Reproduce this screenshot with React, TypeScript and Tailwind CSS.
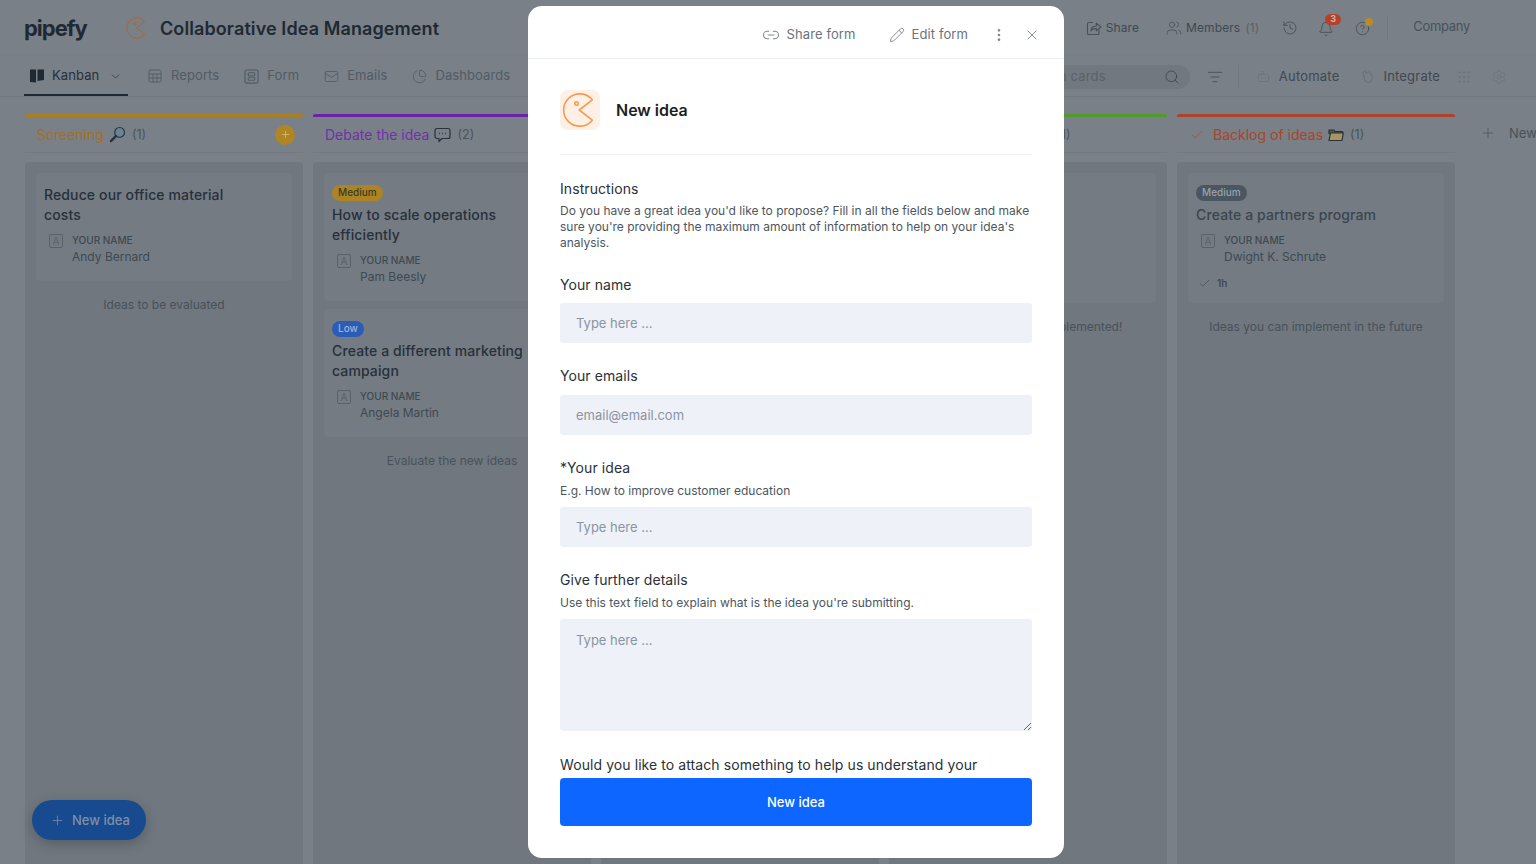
import {
  Bell,
  Bot,
  Check,
  ChevronDown,
  CircleHelp,
  EllipsisVertical,
  Grip,
  History,
  Link2,
  ListFilter,
  Mail,
  Pencil,
  PieChart,
  Plus,
  Search,
  Settings,
  Sheet,
  Users,
  X,
} from "lucide-react";
import type { ReactNode } from "react";

const Pacman = ({ className, color }: { className: string; color: string }) => (
  <svg viewBox="0 0 24 24" fill="none" stroke={color} strokeWidth="1" strokeLinejoin="round" className={className}>
    <path d="M19.8 5.6a10.2 10.2 0 1 0 0 12.8L11.5 12Z" />
    <circle cx="9.8" cy="7.9" r="1.1" />
  </svg>
);

const KanbanIcon = () => (
  <svg viewBox="0 0 14 14" className="w-[14px] h-[14px]" fill="#1f2933">
    <path d="M0 .5h6v13l-6-.5zM7.500.5H14v10.500l-6.500 1z" />
  </svg>
);

const FormIcon = () => (
  <svg viewBox="0 0 16 16" className="w-[15px] h-[15px]" fill="none" stroke="#515b65" strokeWidth="1.2">
    <rect x="1" y="1" width="14" height="14" rx="2" />
    <rect x="4.5" y="4" width="7" height="3.2" rx="1" />
    <rect x="4.5" y="8.8" width="7" height="3.2" rx="1" />
  </svg>
);

const ShareIcon = () => (
  <svg viewBox="0 0 16 16" className="w-[16px] h-[16px]" fill="none" stroke="#48525c" strokeWidth="1.1" strokeLinejoin="round">
    <path d="M7 2.5H2.5a1 1 0 0 0-1 1v10a1 1 0 0 0 1 1h9.5a1 1 0 0 0 1-1V10" />
    <path d="M4.8 11c.4-3 2.4-5 5.5-5V3.2L15 7l-4.7 3.8V8.4C8 8.400 6 9.300 4.800 11Z" />
  </svg>
);

const PlugIcon = () => (
  <svg viewBox="0 0 16 16" className="w-[15px] h-[15px]" fill="none" stroke="#69717a" strokeWidth="1.1" strokeLinejoin="round">
    <path d="M3 3.500 5.500 2l.8 2.600L9.800 3l3 4.200c1 2.800.2 6-3.300 6.800-3.300.3-5.300-2-5-4.800z" />
  </svg>
);

const Magnifier = () => (
  <svg viewBox="0 0 16 16" className="w-[17px] h-[17px]">
    <circle cx="10" cy="6" r="4.600" fill="#6b8395" stroke="#27323c" strokeWidth="1.100" />
    <path d="M6.500 9.500 1.800 14.200" stroke="#27323c" strokeWidth="2.200" strokeLinecap="round" />
  </svg>
);

const Balloon = () => (
  <svg viewBox="0 0 17 16" className="w-[17px] h-[16px]" fill="none" stroke="#27323c" strokeWidth="1.200" strokeLinejoin="round">
    <path d="M3 1.500h11a2 2 0 0 1 2 2v6a2 2 0 0 1-2 2H8l-3 3v-3H3a2 2 0 0 1-2-2v-6a2 2 0 0 1 2-2Z" />
    <path d="M5 6.500h.8M8.100 6.500h.8M11.200 6.500h.8" strokeWidth="1.400" />
  </svg>
);

const Folder = () => (
  <svg viewBox="0 0 16 14" className="w-[16px] h-[14px]" stroke="#27323c" strokeWidth="1.200" strokeLinejoin="round">
    <path d="M1 2h5l1.200 1.500H14.500v2H1Z" fill="#5a5640" />
    <path d="M1 12.500 2.500 5H15.300L14 12.500Z" fill="#a8965e" />
  </svg>
);

const FieldValue = ({ value }: { value: string }) => (
  <div className="flex mt-[8px] pl-[5px]">
    <div className="w-[14px] h-[14px] mt-[1px] rounded-[2px] border border-[#59626b] flex items-center justify-center text-[10px] leading-none text-[#59626b]">
      A
    </div>
    <div className="ml-[9px]">
      <div className="text-[10px] leading-[14px] font-medium text-[#3f4952]">YOUR NAME</div>
      <div className="text-[12px] leading-[18px] mt-[1px] text-[#3f4952]">{value}</div>
    </div>
  </div>
);

type CardData = {
  title: string;
  name: string;
  badge?: "Medium" | "Low" | "Gray";
  done?: boolean;
};

const Badge = ({ kind }: { kind: "Medium" | "Low" | "Gray" }) => {
  if (kind === "Low") {
    return <span className="block w-fit h-[16px] px-[6px] rounded-full bg-[#2a5cb8] text-[#9eb3d6] text-[10px] leading-[15px] font-medium">Low</span>;
  }
  if (kind === "Gray") {
    return <span className="block w-fit h-[16px] px-[6px] rounded-full bg-[#4a5662] text-[#98a3ad] text-[10px] leading-[15px] font-medium">Medium</span>;
  }
  return <span className="block w-fit h-[16px] px-[6px] rounded-full bg-[#ad8424] text-[#3e3a25] text-[10px] leading-[15px] font-medium">Medium</span>;
};

const Card = ({ card }: { card: CardData }) => (
  <div className="rounded-[4px] bg-[#747b82] px-[8px] pt-[12px] pb-[15px] mb-[8px]">
    {card.badge && (
      <div className="mb-[4px]">
        <Badge kind={card.badge} />
      </div>
    )}
    <div className={"text-[14px] tracking-[0.12px] leading-[20px] font-medium pr-[30px] " + (card.badge === "Gray" ? "text-[#3a4550]" : "text-[#27303a]")}>
      {card.title}
    </div>
    <FieldValue value={card.name} />
    {card.done && (
      <div className="flex items-center gap-[6px] mt-[9px] mb-[-3px] pl-[2px] text-[10px] leading-[16px] font-semibold text-[#3f4952]">
        <Check size={13} strokeWidth={1.200} color="#3f4952" />
        1h
      </div>
    )}
  </div>
);

type ColumnData = {
  title: ReactNode;
  color: string;
  bar: string;
  count?: string;
  emoji?: ReactNode;
  check?: boolean;
  add?: boolean;
  cards: CardData[];
  blank?: boolean;
  note?: string;
};

const Column = ({ col }: { col: ColumnData }) => (
  <div className="w-[278px] shrink-0 flex flex-col gap-[9px]">
    <div className={"h-[39px] rounded-t-[2px] border-t-[3px] border-b border-b-[#71787f] flex items-center pl-[12px] pr-[8px] " + col.bar}>
      {col.check && <Check size={14} strokeWidth={1.300} color="#a8452a" className="mr-[9px] ml-[1px]" />}
      <span className={"text-[14px] whitespace-nowrap " + col.color}>{col.title}</span>
      {col.emoji && <span className="ml-[5px] flex items-center">{col.emoji}</span>}
      {col.count && <span className="ml-[6px] mt-[1px] text-[12.500px] text-[#4a545e]">{col.count}</span>}
      {col.add && (
        <span className="ml-auto w-[20px] h-[20px] rounded-full bg-[#b08524] flex items-center justify-center">
          <Plus size={11} color="#d0b478" />
        </span>
      )}
    </div>
    <div className="flex-1 bg-[#70777e] rounded-t-[4px] px-[11px] pt-[11px]">
      {col.cards.map((card) => (
        <Card key={card.title} card={card} />
      ))}
      {col.blank && <div className="h-[130px] rounded-[4px] bg-[#747b82] mb-[8px]" />}
      {col.note && <div className="text-center text-[12px] leading-[18px] mt-[15px] text-[#48525c] whitespace-nowrap">{col.note}</div>}
    </div>
  </div>
);

const columns: ColumnData[] = [
  {
    title: "Screening",
    color: "text-[#a66f1e]",
    bar: "border-t-[#a97f22]",
    emoji: <Magnifier />,
    count: "(1)",
    add: true,
    cards: [{ title: "Reduce our office material costs", name: "Andy Bernard" }],
    note: "Ideas to be evaluated",
  },
  {
    title: "Debate the idea",
    color: "text-[#7230ab]",
    bar: "border-t-[#6c22a6]",
    emoji: <Balloon />,
    count: "(2)",
    cards: [
      { title: "How to scale operations efficiently", name: "Pam Beesly", badge: "Medium" },
      { title: "Create a different marketing campaign", name: "Angela Martin", badge: "Low" },
    ],
    note: "Evaluate the new ideas",
  },
  {
    title: "",
    color: "",
    bar: "border-t-[#70777e]",
    cards: [],
  },
  {
    title: "Implement these ideas",
    color: "text-[#787f86]",
    bar: "border-t-[#4f9a2c]",
    count: "(1)",
    cards: [],
    blank: true,
    note: "These ideas will be implemented!",
  },
  {
    title: "Backlog of ideas",
    color: "text-[#a8452a]",
    bar: "border-t-[#aa452b]",
    check: true,
    emoji: <Folder />,
    count: "(1)",
    cards: [{ title: "Create a partners program", name: "Dwight K. Schrute", badge: "Gray", done: true }],
    note: "Ideas you can implement in the future",
  },
];

const NavItem = ({ icon, label }: { icon: ReactNode; label: string }) => (
  <div className="flex items-center gap-[8px] text-[13px] tracking-[0.1px] text-[#515b65]">
    {icon}
    {label}
  </div>
);

const Label = ({ children }: { children: ReactNode }) => (
  <div className="text-[14px] tracking-[0.08px] leading-[20px] text-[#2a3138]">{children}</div>
);

const Hint = ({ children }: { children: ReactNode }) => (
  <div className="text-[12px] leading-[16px] text-[#4d5660] mt-[5px]">{children}</div>
);

const inputClass =
  "block w-full h-[40px] mt-[8px] rounded-[3px] bg-[#eef1f8] px-[16px] text-[13px] outline-none placeholder:text-[#8a94a3]";

const Modal = () => (
  <div className="absolute left-[528px] top-[6px] w-[536px] h-[852px] rounded-[14px] bg-white flex flex-col overflow-hidden">
    <div className="h-[53px] pt-[5px] shrink-0 border-b border-[#e9f0fa] flex items-center justify-end pr-[24px] text-[13px] tracking-[0.1px] text-[#69727d]">
      <Link2 size={18} strokeWidth={1.400} color="#7f8893" />
      <span className="ml-[7px]">Share form</span>
      <Pencil size={16} strokeWidth={1.400} color="#7f8893" className="ml-[33px]" />
      <span className="ml-[7px]">Edit form</span>
      <EllipsisVertical size={16} strokeWidth={2} color="#7f8893" className="ml-[23px]" />
      <X size={16} strokeWidth={1.400} color="#7f8893" className="ml-[17px]" />
    </div>
    <div className="flex-1 min-h-0 overflow-hidden px-[32px] pt-[31px]">
      <div className="flex items-center gap-[16px] pb-[24px] border-b border-[#eff3f9]">
        <div className="w-[40px] h-[40px] rounded-[7px] bg-[#fff0e6] flex items-center justify-center">
          <Pacman className="w-[38px] h-[38px]" color="#f79a52" />
        </div>
        <div className="text-[16px] font-semibold text-[#1a1f24]">New idea</div>
      </div>
      <div className="mt-[24px]">
        <Label>Instructions</Label>
        <div className="text-[12px] leading-[16px] text-[#4d5660] mt-[4px]">
          Do you have a great idea you'd like to propose? Fill in all the fields below and make sure you're providing the maximum amount of information to help on your idea's analysis.
        </div>
      </div>
      <div className="mt-[24px]">
        <Label>Your name</Label>
        <input className={inputClass} placeholder="Type here ..." />
      </div>
      <div className="mt-[23px]">
        <Label>Your emails</Label>
        <input className={inputClass + " mt-[9px]"} placeholder="email@email.com" />
      </div>
      <div className="mt-[23px]">
        <Label>*Your idea</Label>
        <Hint>E.g. How to improve customer education</Hint>
        <input className={inputClass} placeholder="Type here ..." />
      </div>
      <div className="mt-[23px]">
        <Label>Give further details</Label>
        <Hint>Use this text field to explain what is the idea you're submitting.</Hint>
        <textarea className={inputClass + " h-[112px] pt-[12px]"} placeholder="Type here ..." />
      </div>
      <div className="mt-[24px]">
        <Label>Would you like to attach something to help us understand your proposal better?</Label>
      </div>
    </div>
    <div className="shrink-0 px-[32px] pb-[32px]">
      <button className="w-full h-[48px] pt-[1px] rounded-[4px] bg-[#0d66ff] text-white text-[13px] font-medium">New idea</button>
    </div>
  </div>
);

export default function App() {
  return (
    <div className="relative h-screen w-full overflow-hidden bg-[#798087] flex flex-col" style={{ fontFamily: "Inter, 'Noto Sans', sans-serif" }}>
      <header className="h-[56px] shrink-0 flex items-center pl-[24px] border-b border-[#777e85]">
        <div className="text-[22px] font-bold tracking-[-1px] text-[#1f2933] w-[76px] leading-none">pipefy</div>
        <Pacman className="w-[24px] h-[24px] ml-[25px]" color="#a5683c" />
        <div className="ml-[11px] pt-[1px] text-[18px] tracking-[0.1px] font-semibold text-[#1f2933] whitespace-nowrap">Collaborative Idea Management</div>
        <div className="ml-auto flex items-center pt-[1px] text-[12px] tracking-[0.1px] text-[#3f4952] pr-[66px]">
          <ShareIcon />
          <span className="ml-[4px]">Share</span>
          <Users size={16} strokeWidth={1.200} color="#48525c" className="ml-[27px]" />
          <span className="ml-[4px]">Members</span>
          <span className="ml-[5px] text-[#59626b]">(1)</span>
          <History size={16} strokeWidth={1.200} color="#3f4952" className="ml-[23px]" />
          <span className="relative ml-[20px] mt-[2px] flex">
            <Bell size={16} strokeWidth={1.200} color="#3f4952" />
            <span className="absolute left-[7px] top-[-7px] w-[16px] h-[11px] rounded-full bg-[#b5412a] text-[#d8b9ae] text-[8.500px] leading-[11px] font-bold text-center">3</span>
          </span>
          <span className="relative ml-[21px] flex">
            <CircleHelp size={15} strokeWidth={1.200} color="#3f4952" />
            <span className="absolute left-[10px] top-[-3px] w-[8px] h-[8px] rounded-full bg-[#bc8a22]" />
          </span>
          <span className="ml-[17px] h-[24px] w-px bg-[#727980]" />
          <span className="ml-[25px] mb-[2px] text-[13px] tracking-[-0.3px] text-[#48525c]">Company</span>
        </div>
      </header>
      <nav className="h-[41px] shrink-0 flex items-center pl-[24px] border-b border-[#71787f]">
        <div className="h-full w-[104px] flex items-center pl-[6px] pt-[2px] gap-[8px] border-b-2 border-[#1f2933] text-[13px] tracking-[0.1px] text-[#27303a]">
          <KanbanIcon />
          Kanban
          <ChevronDown size={13} strokeWidth={1.300} color="#27303a" className="ml-[2px]" />
        </div>
        <div className="ml-[19px] flex items-center gap-[25px]">
          <NavItem icon={<Sheet size={16} strokeWidth={1.300} color="#515b65" />} label="Reports" />
          <NavItem icon={<FormIcon />} label="Form" />
          <NavItem icon={<Mail size={15} strokeWidth={1.300} color="#515b65" />} label="Emails" />
          <NavItem icon={<PieChart size={15} strokeWidth={1.300} color="#515b65" />} label="Dashboards" />
        </div>
        <div className="ml-auto flex items-center pt-[1px] pr-[29px]">
          <div className="w-[200px] h-[24px] rounded-full bg-[#71787f] flex items-center justify-end pr-[10px] text-[13px] tracking-[0.2px] text-[#59626b]">
            <span className="mr-[58px]">Search cards</span>
            <Search size={16} strokeWidth={1.400} color="#3f4952" />
          </div>
          <ListFilter size={16} strokeWidth={1.200} color="#3f4952" className="ml-[17px]" />
          <span className="ml-[15px] h-[24px] w-px bg-[#727980]" />
          <Bot size={15} strokeWidth={1.000} color="#69717a" className="ml-[17px]" />
          <span className="ml-[8px] text-[13px] tracking-[0.2px] text-[#3f4952]">Automate</span>
          <span className="ml-[21px]"><PlugIcon /></span>
          <span className="ml-[8px] text-[13px] tracking-[0.2px] text-[#3f4952]">Integrate</span>
          <Grip size={16} strokeWidth={1.000} color="#69717a" className="ml-[16px]" />
          <Settings size={16} strokeWidth={1.000} color="#69717a" className="ml-[19px]" />
        </div>
      </nav>
      <main className="flex-1 min-h-0 flex gap-[10px] pl-[25px] pt-[17px]">
        {columns.map((col, i) => (
          <Column key={i} col={col} />
        ))}
        <div className="flex items-start pt-[10px] pl-[15px] gap-[13px] text-[13px] text-[#48525c] whitespace-nowrap">
          <Plus size={16} strokeWidth={1.100} color="#48525c" className="mt-[1px]" />
          New phase
        </div>
      </main>
      <div className="absolute left-[32px] top-[800px] w-[114px] h-[40px] pt-[1px] rounded-full bg-[#174a8f] shadow-[0_4px_12px_rgba(40,50,60,0.35)] flex items-center pl-[18px] gap-[7px] text-[13px] font-medium text-[#7f90aa]">
        <Plus size={15} strokeWidth={1.200} color="#7f90aa" />
        New idea
      </div>
      <Modal />
    </div>
  );
}
